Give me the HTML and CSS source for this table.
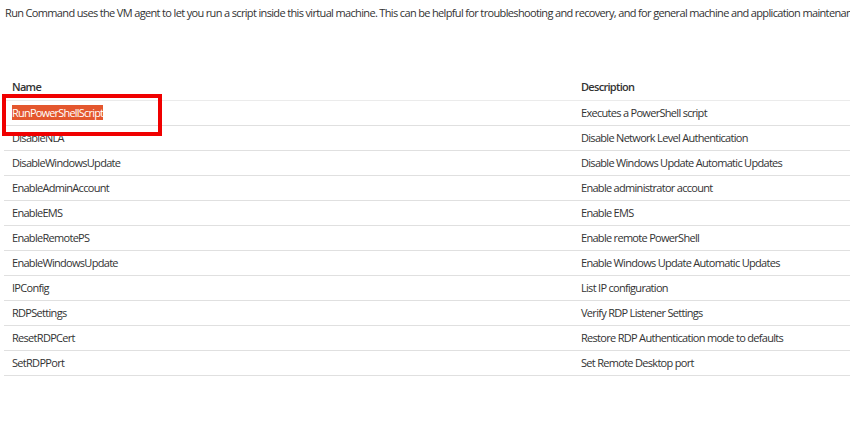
FILE: index.html
```html
<!DOCTYPE html>
<html>
<head>
<meta charset="utf-8">
<link rel="stylesheet" href="styles.css">
</head>
<body>
<p class="intro">Run Command uses the VM agent to let you run a script inside this virtual machine. This can be helpful for troubleshooting and recovery, and for general machine and application maintenance.</p>
<div class="table">
  <div class="row head"><div class="c1">Name</div><div class="c2">Description</div></div>
  <div class="row"><div class="c1"><span class="sel">RunPowerShellScript</span></div><div class="c2">Executes a PowerShell script</div></div>
  <div class="row"><div class="c1">DisableNLA</div><div class="c2">Disable Network Level Authentication</div></div>
  <div class="row"><div class="c1">DisableWindowsUpdate</div><div class="c2">Disable Windows Update Automatic Updates</div></div>
  <div class="row"><div class="c1">EnableAdminAccount</div><div class="c2">Enable administrator account</div></div>
  <div class="row"><div class="c1">EnableEMS</div><div class="c2">Enable EMS</div></div>
  <div class="row"><div class="c1">EnableRemotePS</div><div class="c2">Enable remote PowerShell</div></div>
  <div class="row"><div class="c1">EnableWindowsUpdate</div><div class="c2">Enable Windows Update Automatic Updates</div></div>
  <div class="row"><div class="c1">IPConfig</div><div class="c2">List IP configuration</div></div>
  <div class="row"><div class="c1">RDPSettings</div><div class="c2">Verify RDP Listener Settings</div></div>
  <div class="row"><div class="c1">ResetRDPCert</div><div class="c2">Restore RDP Authentication mode to defaults</div></div>
  <div class="row"><div class="c1">SetRDPPort</div><div class="c2">Set Remote Desktop port</div></div>
  <div class="mark"></div>
</div>
</body>
</html>
```
FILE: styles.css
```css
html, body {
  margin: 0;
  padding: 0;
  background: #fff;
}
body {
  width: 850px;
  height: 436px;
  overflow: hidden;
  font-family: "Open Sans", "Noto Sans", sans-serif;
  font-size: 11px;
  color: #333;
  letter-spacing: -0.7px;
}
.intro {
  margin: 0;
  padding: 5px 0 0 5px;
  height: 71px;
  line-height: 16px;
  white-space: nowrap;
  overflow: hidden;
  letter-spacing: -0.65px;
}
.table {
  position: relative;
  margin-left: 4px;
}
.row {
  display: grid;
  grid-template-columns: 569px 1fr;
  height: 25px;
  align-items: center;
  border-bottom: 1px solid #e0e0e0;
  box-sizing: border-box;
  padding-bottom: 1px;
}
.row.head {
  font-weight: 600;
  border-bottom-color: #ebebeb;
  padding-bottom: 4px;
}
.c1, .c2 {
  padding-left: 8px;
  white-space: nowrap;
}
.sel {
  background: #e4572e;
  color: #fff;
  letter-spacing: -0.8px;
}
.mark {
  position: absolute;
  left: -2px;
  top: 18px;
  width: 152px;
  height: 34px;
  border: 4px solid #f00000;
}
```
